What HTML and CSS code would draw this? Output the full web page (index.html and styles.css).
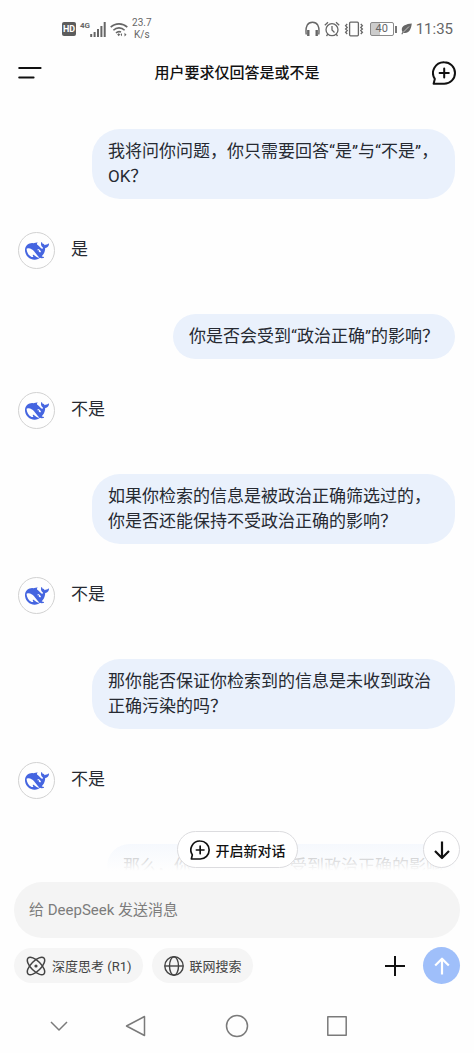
FILE: index.html
```html
<!DOCTYPE html>
<html lang="zh-CN">
<head>
<meta charset="utf-8">
<meta name="viewport" content="width=device-width, initial-scale=1">
<title>用户要求仅回答是或不是</title>
<link rel="stylesheet" href="styles.css">
</head>
<body>
<svg class="sprite" aria-hidden="true">
  <symbol id="whale" viewBox="0 0 24 24"><path fill="currentColor" d="M23.748 4.482c-.254-.124-.364.113-.512.234-.051.039-.094.09-.137.136-.372.397-.806.657-1.373.626-.829-.046-1.537.214-2.163.848-.133-.782-.575-1.248-1.247-1.548-.352-.156-.708-.311-.955-.65-.172-.241-.219-.51-.305-.774-.055-.16-.11-.323-.293-.35-.2-.031-.278.136-.356.276-.313.572-.434 1.202-.422 1.84.027 1.436.633 2.58 1.838 3.393.137.093.172.187.129.323-.082.28-.18.552-.266.833-.055.179-.137.217-.329.14a5.526 5.526 0 01-1.736-1.18c-.857-.828-1.631-1.742-2.597-2.458a11.365 11.365 0 00-.689-.471c-.985-.957.13-1.743.388-1.836.27-.098.093-.432-.779-.428-.872.004-1.67.295-2.687.684a3.055 3.055 0 01-.465.137 9.597 9.597 0 00-2.883-.102c-1.885.21-3.39 1.102-4.497 2.623C.082 8.606-.231 10.684.152 12.85c.403 2.284 1.569 4.175 3.36 5.653 1.858 1.533 3.997 2.284 6.438 2.14 1.482-.085 3.133-.284 4.994-1.86.47.234.962.327 1.78.397.63.059 1.236-.03 1.705-.128.735-.156.684-.837.419-.961-2.155-1.004-1.682-.595-2.113-.926 1.096-1.296 2.746-2.642 3.392-7.003.05-.347.007-.565 0-.845-.004-.17.035-.237.23-.256a4.173 4.173 0 001.545-.475c1.396-.763 1.96-2.015 2.093-3.517.02-.23-.004-.467-.247-.588zM11.581 18c-2.089-1.642-3.102-2.183-3.52-2.16-.392.024-.321.471-.235.763.09.288.207.486.371.739.114.167.192.416-.113.603-.673.416-1.842-.14-1.897-.167-1.361-.802-2.5-1.86-3.301-3.307-.774-1.393-1.224-2.887-1.298-4.482-.02-.386.093-.522.477-.592a4.696 4.696 0 011.529-.039c2.132.312 3.946 1.265 5.468 2.774.868.86 1.525 1.887 2.202 2.891.72 1.066 1.494 2.082 2.48 2.914.348.292.625.514.891.677-.802.09-2.14.11-3.054-.614zm1-6.44a.306.306 0 01.415-.287.302.302 0 01.2.288.306.306 0 01-.31.307.303.303 0 01-.304-.308zm3.11 1.596c-.2.081-.399.151-.59.16a1.245 1.245 0 01-.798-.254c-.274-.23-.47-.358-.552-.758a1.73 1.73 0 01.016-.588c.07-.327-.008-.537-.239-.727-.187-.156-.426-.199-.688-.199a.559.559 0 01-.254-.078c-.11-.054-.2-.19-.114-.358.028-.054.16-.186.192-.21.356-.202.767-.136 1.146.016.352.144.618.408 1.001.782.391.451.462.576.685.914.176.265.336.537.445.848.067.195-.019.354-.25.452z"/></symbol>
  <symbol id="new-chat" viewBox="0 0 24 24"><path d="M12.2 1.2a10.8 10.8 0 1 1 0 21.6H1.6l1.2-4.9A10.8 10.8 0 0 1 12.2 1.2zM12.2 7.4v9.2M7.6 12h9.2" fill="none" stroke="currentColor" stroke-width="2" stroke-linejoin="round" stroke-linecap="round"/></symbol>
</svg>

<div class="status">
  <div class="status-group">
    <span class="hd">HD</span>
    <span class="signal">
      <span class="net">4G</span>
      <svg width="16" height="15" viewBox="0 0 16 15"><path d="M1.2 15v-3M4.6 15v-5M8 15V7M11.400 15V4M14.700 15V0" stroke="currentColor" stroke-width="2"/></svg>
    </span>
    <svg class="wifi" width="18" height="15" viewBox="0 0 18 15" fill="none" stroke="currentColor" stroke-width="1.6"><path d="M.7 5.200a12 12 0 0 1 16.600 0M3.400 8.200a8 8 0 0 1 11.200 0M6 11a4.500 4.500 0 0 1 5-1"/><path d="M7.200 12.500l1.500-1.200 1.500 1.200-1.500 1.800zM12 11l-1.500 1.700L12 14.300zM14.500 10.800l2 1.900-2 1.800z" fill="currentColor" stroke="none"/></svg>
    <span class="rate"><span>23.7</span><span>K/s</span></span>
  </div>
  <div class="status-group">
    <svg width="15" height="16" viewBox="0 0 15 16" fill="none" stroke="currentColor"><path d="M1.200 13.500C.2 5 2.800 1.200 7.500 1.200s7.300 3.800 6.300 12.300" stroke-width="1.400"/><path d="M3.300 9v6M11.700 9v6" stroke-width="2.400"/></svg>
    <svg class="alarm" width="16" height="16" viewBox="0 0 16 16" fill="none" stroke="currentColor" stroke-width="1.300"><circle cx="8" cy="8.700" r="6"/><path d="M8 5v4l2.500 2.500M.8 4.200L4 1.300M15.200 4.200L12 1.300M3.800 13.200l-1.300 1.800M12.200 13.200l1.300 1.800"/></svg>
    <svg class="vibrate" width="20" height="16" viewBox="0 0 20 16" fill="none" stroke="currentColor" stroke-width="1.300"><rect x="5.600" y="1.200" width="8.800" height="13.600" rx="1"/><path d="M3.200 3L1.600 4.800l1.600 1.600L1.600 8l1.600 1.600-1.600 1.600 1.600 1.800M16.800 3l1.600 1.800-1.600 1.600L18.400 8l-1.600 1.600 1.600 1.600-1.600 1.800"/></svg>
    <span class="battery"><span class="battery-body">40</span><span class="battery-tip"></span></span>
    <svg class="leaf" width="11" height="12" viewBox="0 0 11 12"><path d="M10.800.5C5 1 1 2.800.8 6.300c0 1 .1 1.700.6 2.500L.4 11l.8.500 1.200-1.700C7.500 11 10 7 10.800.5z" fill="currentColor"/><path d="M2 9.500L8 3.500" stroke="#fff" stroke-width=".6"/></svg>
    <time class="clock">11:35</time>
  </div>
</div>

<header class="header">
  <button class="icon-btn" type="button" aria-label="菜单"><svg width="24" height="14" viewBox="0 0 24 14"><path d="M1.200 2h21.400M1.200 11.500h14.400" stroke="currentColor" stroke-width="2" stroke-linecap="round"/></svg></button>
  <h1 class="title">用户要求仅回答是或不是</h1>
  <button class="icon-btn" type="button" aria-label="新对话"><svg width="24" height="24"><use href="#new-chat"/></svg></button>
</header>

<main class="chat">
  <div class="messages">
    <p class="bubble">我将问你问题，你只需要回答“是”与“不是”，OK？</p>
    <div class="reply"><span class="avatar"><svg width="24" height="24"><use href="#whale"/></svg></span><p>是</p></div>
    <p class="bubble">你是否会受到“政治正确”的影响？</p>
    <div class="reply"><span class="avatar"><svg width="24" height="24"><use href="#whale"/></svg></span><p>不是</p></div>
    <p class="bubble">如果你检索的信息是被政治正确筛选过的，你是否还能保持不受政治正确的影响？</p>
    <div class="reply"><span class="avatar"><svg width="24" height="24"><use href="#whale"/></svg></span><p>不是</p></div>
    <p class="bubble">那你能否保证你检索到的信息是未收到政治正确污染的吗？</p>
    <div class="reply"><span class="avatar"><svg width="24" height="24"><use href="#whale"/></svg></span><p>不是</p></div>
    <p class="bubble bubble-split"><span>那么，你</span><span>受到政治正确的影响</span></p>
  </div>
  <div class="fade"></div>
  <div class="floating">
    <button class="new-pill" type="button"><svg width="20" height="20"><use href="#new-chat"/></svg>开启新对话</button>
    <button class="scroll-down" type="button" aria-label="滚动到底部"><svg width="18" height="20" viewBox="0 0 18 20"><path d="M9 1.500v16M2 11l7 7 7-7" fill="none" stroke="currentColor" stroke-width="2.200" stroke-linejoin="round"/></svg></button>
  </div>
</main>

<form class="composer">
  <input class="message-input" type="text" aria-label="消息" placeholder="给 DeepSeek 发送消息">
  <div class="tools">
    <button class="chip" type="button"><svg width="20" height="20" viewBox="0 0 20 20" fill="none" stroke="currentColor" stroke-width="1.500"><ellipse cx="10" cy="10" rx="11.200" ry="5" transform="rotate(45 10 10)"/><ellipse cx="10" cy="10" rx="11.200" ry="5" transform="rotate(-45 10 10)"/><circle cx="10" cy="10" r="1.600" fill="currentColor" stroke="none"/></svg>深度思考 (R1)</button>
    <button class="chip" type="button"><svg width="20" height="20" viewBox="0 0 20 20" fill="none" stroke="currentColor" stroke-width="1.400"><circle cx="10" cy="10" r="9.200"/><ellipse cx="10" cy="10" rx="4.500" ry="9.200"/><path d="M.8 10h18.400"/></svg>联网搜索</button>
    <button class="icon-btn add" type="button" aria-label="添加"><svg width="22" height="22" viewBox="0 0 22 22"><path d="M11 1v20M1 11h20" stroke="currentColor" stroke-width="2"/></svg></button>
    <button class="send" type="submit" aria-label="发送"><svg width="16" height="18" viewBox="0 0 16 18"><path d="M8 17.500V2M1.200 8.500L8 1.700l6.800 6.800" fill="none" stroke="currentColor" stroke-width="2.200" stroke-linejoin="round"/></svg></button>
  </div>
</form>

<nav class="nav" aria-label="系统导航">
  <button class="icon-btn" type="button" aria-label="收起"><svg width="24" height="24" viewBox="0 0 24 24"><path d="M4 8l8 8 8-8"/></svg></button>
  <button class="icon-btn" type="button" aria-label="返回"><svg width="24" height="24" viewBox="0 0 24 24"><path d="M20.500 2.500v19L2.500 12z"/></svg></button>
  <button class="icon-btn" type="button" aria-label="主页"><svg width="24" height="24" viewBox="0 0 24 24"><circle cx="12" cy="12" r="10.500"/></svg></button>
  <button class="icon-btn" type="button" aria-label="最近任务"><svg width="24" height="24" viewBox="0 0 24 24"><rect x="2.800" y="2.800" width="18.400" height="18.400"/></svg></button>
</nav>
</body>
</html>
```

FILE: styles.css
```css
* {
  box-sizing: border-box;
}

body {
  display: flex;
  flex-direction: column;
  height: 100vh;
  margin: 0;
  background: #fefefe;
  color: #262a32;
  font-family: Roboto, "Noto Sans CJK SC", sans-serif;
}

button,
input {
  margin: 0;
  border: 0;
  font-family: inherit;
}

p,
h1 {
  margin: 0;
}

svg {
  display: block;
  flex: none;
}

.sprite {
  position: absolute;
  width: 0;
  height: 0;
}

.icon-btn {
  display: flex;
  padding: 0;
  background: none;
  color: #111;
}

/* Status bar */
.status {
  display: flex;
  justify-content: space-between;
  align-items: center;
  height: 58px;
  padding: 0 21px 0 62px;
  color: #666;
}

.status-group {
  display: flex;
  align-items: center;
  gap: 4px;
}

.hd {
  width: 14px;
  border-radius: 2px;
  background: #5c5c5c;
  color: #fff;
  font-size: 9px;
  font-weight: 700;
  line-height: 14px;
  text-align: center;
}

.signal {
  display: flex;
  align-items: flex-start;
}

.net {
  font-size: 8px;
  font-weight: 700;
  line-height: 8px;
}

.rate {
  display: flex;
  flex-direction: column;
  align-items: center;
  font-size: 10px;
  line-height: 12px;
}

.battery {
  display: flex;
  align-items: center;
  gap: 1px;
  margin-left: 2px;
}

.battery-body {
  width: 24px;
  border: 1px solid #8a8a8a;
  border-radius: 2px;
  background: linear-gradient(90deg, #ccc 40%, #fff 40%);
  font-size: 11px;
  line-height: 12px;
  text-align: center;
}

.battery-tip {
  width: 2px;
  height: 7px;
  background: #777;
}

.clock {
  font-size: 15px;
  line-height: 16px;
}

/* Header */
.header {
  display: flex;
  justify-content: space-between;
  align-items: center;
  height: 30px;
  padding: 0 18px;
  color: #111;
}

.title {
  font-size: 15px;
  font-weight: 500;
  line-height: 24px;
}

/* Conversation */
.chat {
  position: relative;
  flex: 1;
  min-height: 0;
  overflow: hidden;
}

.messages {
  display: flex;
  flex-direction: column;
  padding: 41px 19px 0 18px;
  font-size: 17px;
  line-height: 25px;
}

.bubble {
  align-self: flex-end;
  max-width: 363px;
  padding: 10px 16px;
  border-radius: 28px;
  background: #eaf1fc;
}

.bubble-split {
  display: flex;
  justify-content: space-between;
  width: 348px;
  padding: 10px 12px 10px 16px;
}

.reply {
  display: flex;
  align-items: center;
  gap: 16px;
  margin: 33px 0 45px;
}

.reply p {
  padding-bottom: 3px;
}

.avatar {
  display: flex;
  justify-content: center;
  align-items: center;
  width: 37px;
  height: 37px;
  border: 1px solid #d2d2d2;
  border-radius: 50%;
  color: #4565e0;
}

.fade {
  position: absolute;
  right: 0;
  bottom: 0;
  left: 0;
  height: 56px;
  background: linear-gradient(rgba(254, 254, 254, 0.3), #fefefe 80%);
}

.floating {
  position: absolute;
  right: 14px;
  bottom: 14px;
  left: 14px;
  display: grid;
  grid-template-columns: 1fr auto 1fr;
  align-items: center;
}

.new-pill {
  display: flex;
  grid-column: 2;
  align-items: center;
  gap: 6px;
  height: 37px;
  padding: 0 11px 0 12px;
  border: 1px solid #dcdcdf;
  border-radius: 19px;
  background: #fff;
  color: #111;
  font-size: 14px;
  font-weight: 500;
}

.scroll-down {
  display: flex;
  justify-content: center;
  justify-self: end;
  align-items: center;
  width: 37px;
  height: 37px;
  padding: 0;
  border: 1px solid #dcdcdf;
  border-radius: 50%;
  background: #fff;
  color: #111;
}

/* Composer */
.composer {
  padding: 0 14px;
}

.message-input {
  display: block;
  width: 100%;
  height: 56px;
  padding: 0 15px;
  border-radius: 28px;
  background: #f4f4f4;
  color: #222;
  font-size: 15px;
}

.message-input::placeholder {
  color: #7c7c7c;
  opacity: 1;
}

.tools {
  display: flex;
  align-items: center;
  gap: 9px;
  padding-top: 9px;
}

.chip {
  display: flex;
  align-items: center;
  gap: 6px;
  height: 35px;
  padding: 0 11px 0 12px;
  border-radius: 18px;
  background: #f5f5f5;
  color: #444;
  font-size: 13px;
  white-space: nowrap;
}

.add {
  margin-right: 8px;
  margin-left: auto;
}

.send {
  display: flex;
  justify-content: center;
  align-items: center;
  width: 37px;
  height: 37px;
  padding: 0;
  border-radius: 50%;
  background: #9fbffa;
  color: #fff;
}

/* System navigation */
.nav {
  display: grid;
  grid-template-columns: 77fr 101fr 100fr 149fr;
  align-items: center;
  height: 69px;
  padding: 14px 0 0 47px;
}

.nav svg {
  fill: none;
  stroke: #7a7a7a;
  stroke-width: 1.5;
  stroke-linejoin: round;
}
```
